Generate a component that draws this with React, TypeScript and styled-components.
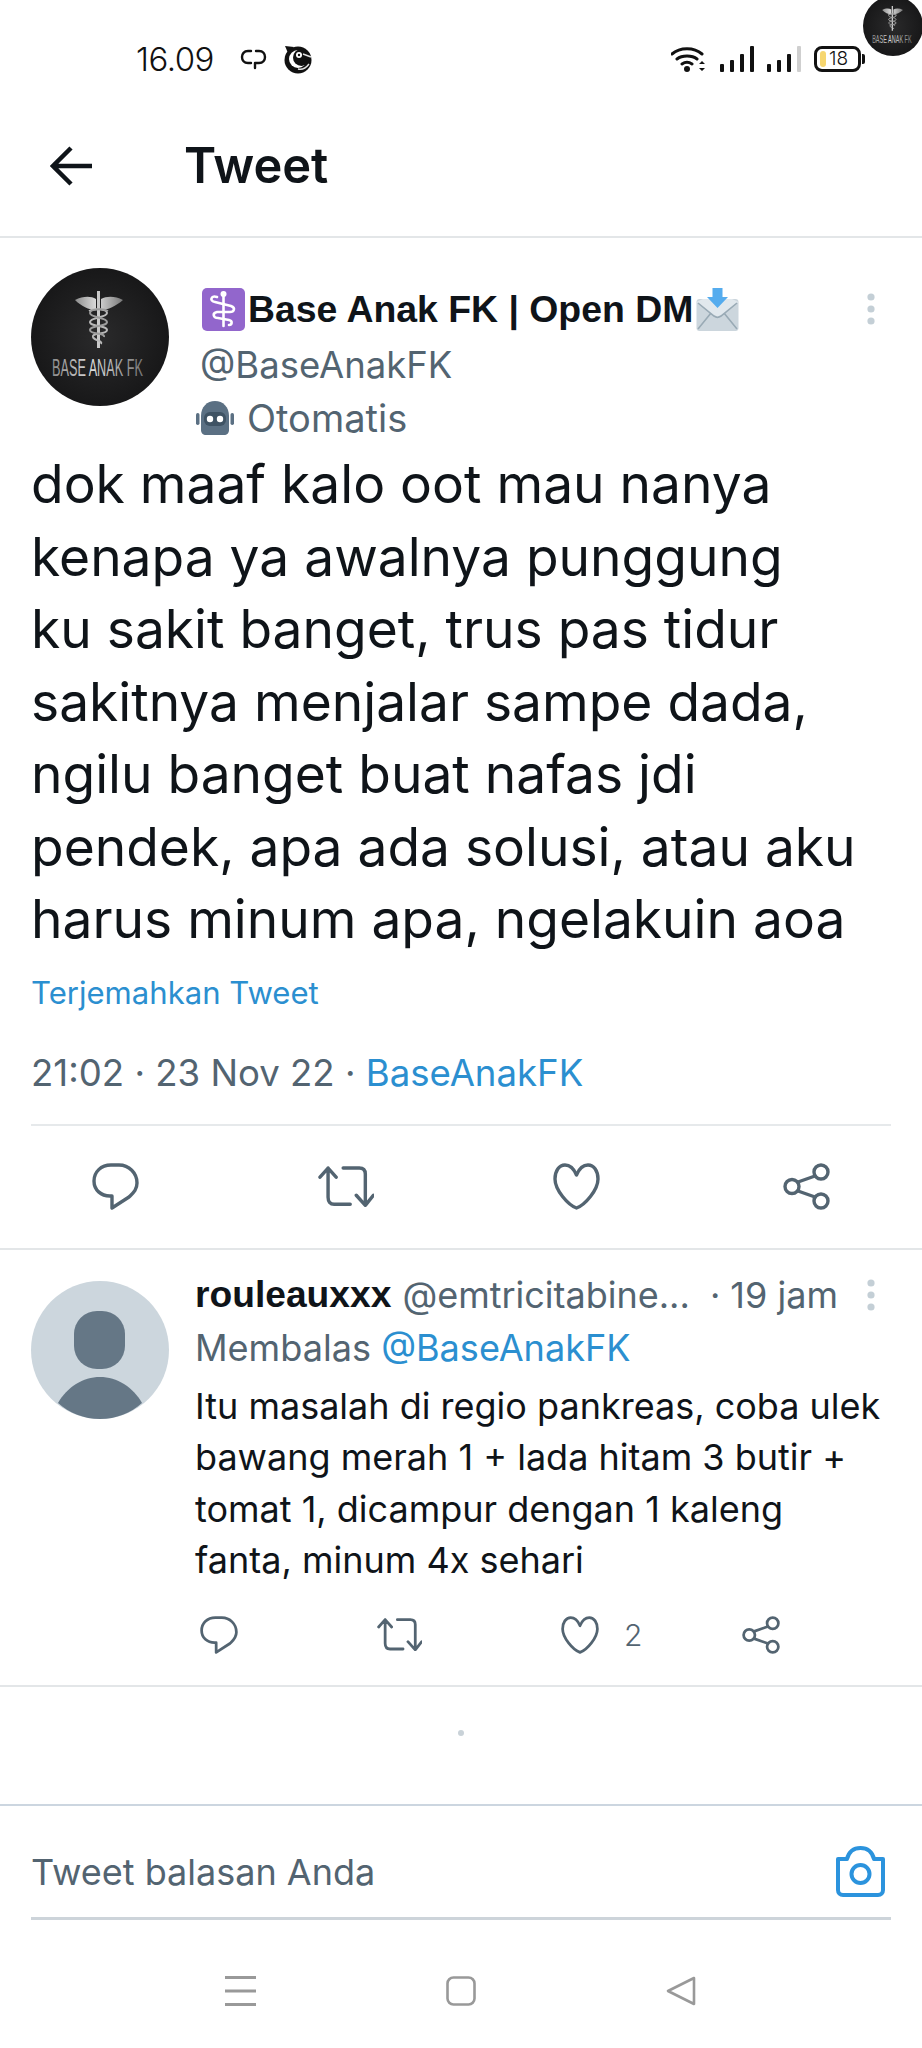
import React from "react";
import styled, { createGlobalStyle } from "styled-components";

const Global = createGlobalStyle`
  html, body { margin: 0; padding: 0; background: #fff; }
  * { box-sizing: border-box; }
`;

const GREY = "#536471";
const BLUE = "#2b8fd0";
const INK = "#0f1419";

const Page = styled.div`
  position: relative;
  width: 922px;
  height: 2048px;
  overflow: hidden;
  background: #fff;
  color: ${INK};
  font-family: Inter, "Liberation Sans", sans-serif;
  display: flex;
  flex-direction: column;
`;

const StatusBar = styled.div`
  height: 118px;
  padding: 0 61px 0 136px;
  display: flex;
  align-items: center;
`;
const Clock = styled.span`
  font-size: 33px;
  font-weight: 300;
  color: #111;
  letter-spacing: -0.5px;
  margin-right: 26px;
`;
const StatusGlyph = styled.svg`
  flex-shrink: 0;
`;
const BirdGlyph = styled.svg`
  flex-shrink: 0;
  margin-left: 17px;
`;
const StatusRight = styled.div`
  margin-left: auto;
  display: flex;
  align-items: center;
  gap: 13px;
`;
const Battery = styled.div`
  position: relative;
  width: 47px;
  height: 26px;
  border: 3px solid #111;
  border-radius: 8px;
  display: flex;
  align-items: center;
  padding-left: 3px;
  gap: 3px;
  &::after {
    content: "";
    position: absolute;
    right: -7px;
    top: 5px;
    width: 3px;
    height: 10px;
    background: #111;
    border-radius: 0 2px 2px 0;
  }
`;
const BatteryFill = styled.div`
  width: 6px;
  height: 16px;
  background: #f6d66f;
  border-radius: 3px;
`;
const BatteryText = styled.span`
  font-size: 19px;
  line-height: 20px;
  font-weight: 300;
  color: #111;
`;
const CornerBubble = styled.div`
  position: absolute;
  top: -4px;
  right: -1px;
  width: 60px;
  height: 60px;
`;

const Header = styled.header`
  height: 120px;
  padding: 0 0 23px 50px;
  display: flex;
  align-items: center;
  gap: 90px;
  border-bottom: 2px solid #e3e6e8;
`;
const Title = styled.h1`
  margin: 0;
  font-size: 48.8px;
  font-weight: 600;
  line-height: 56px;
  color: ${INK};
`;

const TweetSection = styled.section`
  padding: 0 31px;
`;
const AuthorRow = styled.div`
  display: grid;
  grid-template-columns: 138px 1fr 40px;
  column-gap: 31px;
`;
const AvatarSlot = styled.div<{ $top: number }>`
  margin-top: ${(p) => p.$top}px;
  width: 138px;
  height: 138px;
`;
const Meta = styled.div`
  margin-top: 44px;
  min-width: 0;
`;
const NameLine = styled.div`
  display: flex;
  align-items: center;
  height: 54px;
  padding-left: 2px;
  font-family: "Liberation Sans", Arial, sans-serif;
  font-weight: 700;
  font-size: 37.4px;
  color: ${INK};
  white-space: nowrap;
  gap: 3px;
`;
const MetaLine = styled.div`
  display: flex;
  align-items: center;
  height: 54px;
  margin-top: 2px;
  font-size: 36.5px;
  color: ${GREY};
  white-space: nowrap;
  gap: 13px;
`;
const BotLine = styled(MetaLine)`
  margin-left: -4px;
  margin-top: -1px;
  font-size: 38px;
`;
const MoreDots = styled.svg`
  display: block;
  flex-shrink: 0;
`;
const MoreSlot = styled.div`
  margin-top: 54px;
  display: flex;
  justify-content: center;
`;
const TweetBody = styled.p`
  margin: 3px 0 0;
  font-size: 53.3px;
  line-height: 72.5px;
  color: ${INK};
  white-space: nowrap;
`;
const Translate = styled.div`
  margin-top: 15px;
  font-size: 31.1px;
  line-height: 44px;
  color: ${BLUE};
`;
const Stamp = styled.div`
  margin-top: 36px;
  font-size: 36.6px;
  line-height: 44px;
  color: ${GREY};
`;
const Link = styled.span`
  color: ${BLUE};
`;
const Rule = styled.div`
  height: 2px;
  background: #e6e9eb;
  margin-top: 29px;
`;
const MainActions = styled.div`
  height: 124px;
  display: grid;
  grid-template-columns: repeat(4, 1fr);
  align-items: center;
  justify-items: center;
  border-bottom: 2px solid #e3e6e8;
`;

const ReplySection = styled.section`
  height: 437px;
  padding: 0 31px;
  display: grid;
  grid-template-columns: 138px 1fr;
  column-gap: 26px;
  border-bottom: 2px solid #e3e6e8;
`;
const ReplyContent = styled.div`
  padding-top: 23px;
  min-width: 0;
`;
const ReplyHead = styled.div`
  display: flex;
  align-items: center;
  height: 44px;
  font-size: 36px;
  white-space: nowrap;
  color: ${GREY};
`;
const ReplyName = styled.span`
  font-family: "Liberation Sans", Arial, sans-serif;
  font-weight: 700;
  font-size: 37.2px;
  color: ${INK};
  margin-right: 11px;
`;
const ReplyAge = styled.span`
  margin-left: 20px;
`;
const MoreInline = styled.span`
  margin-left: auto;
  margin-right: 15px;
  display: flex;
  width: 10px;
  justify-content: center;
`;
const ReplyingTo = styled.div`
  margin-top: 5px;
  height: 52px;
  line-height: 52px;
  font-size: 36.1px;
  color: ${GREY};
  white-space: nowrap;
`;
const ReplyBody = styled.p`
  margin: 7px 0 0;
  font-size: 36px;
  line-height: 51.5px;
  color: ${INK};
  white-space: nowrap;
`;
const ReplyActions = styled.div`
  height: 96px;
  margin-left: 4px;
  display: grid;
  grid-template-columns: repeat(4, 180.5px);
  align-items: center;
`;
const ReplyAction = styled.div`
  display: flex;
  align-items: center;
  gap: 24px;
`;
const IconSlot = styled.div`
  width: 40px;
  height: 40px;
  display: flex;
  align-items: center;
  justify-content: center;
`;
const Count = styled.span`
  font-size: 30px;
  font-weight: 300;
  color: ${GREY};
`;

const Loader = styled.div`
  height: 117px;
  padding-top: 43px;
  display: flex;
  justify-content: center;
`;
const LoaderDot = styled.div`
  width: 6px;
  height: 6px;
  border-radius: 50%;
  background: #c9d2d8;
`;

const Composer = styled.div`
  border-top: 2px solid #ccd6e0;
  height: 113px;
  padding: 21px 36px 0 31px;
  display: flex;
  align-items: center;
  justify-content: space-between;
`;
const Placeholder = styled.span`
  font-size: 36px;
  color: ${GREY};
`;
const ComposerRule = styled.div`
  height: 3px;
  margin: 0 31px;
  background: #cdd4da;
`;
const NavBar = styled.nav`
  flex: 1;
  padding: 14px 226px 0 225px;
  display: flex;
  align-items: center;
  justify-content: space-between;
`;

const Stroke = ({ w, h, vw, vh, color = GREY, sw = 3.4, children }: {
  w: number; h: number; vw: number; vh: number; color?: string; sw?: number; children: React.ReactNode;
}) => (
  <StatusGlyph width={w} height={h} viewBox={`0 0 ${vw} ${vh}`} fill="none" stroke={color} strokeWidth={sw} strokeLinecap="round" strokeLinejoin="round">
    {children}
  </StatusGlyph>
);

const ReplyIcon = ({ s }: { s: number }) => (
  <Stroke w={s} h={s} vw={47} vh={47}>
    <path d="M19 2H27C37 2 45 10 45 20C45 27 41 30 37 34L20 45V33H18C9 33 2 27 2 18C2 9 9 2 19 2Z" />
  </Stroke>
);
const RetweetIcon = ({ s }: { s: number }) => (
  <Stroke w={s * 1.2} h={s * 0.86} vw={56} vh={40}>
    <path d="M2 11L10 2L18 11M10 2V31C10 35 12 38 16 38H32M25 2H41C45 2 47 4 47 8V38M38 29L47 39L55 29" />
  </Stroke>
);
const HeartIcon = ({ s }: { s: number }) => (
  <Stroke w={s} h={s} vw={47} vh={47}>
    <path d="M23.5 12C21 6 17 2 12 2C6 2 2 8 2 16C2 27 15 42 23.5 45C32 42 45 27 45 16C45 8 41 2 35 2C30 2 26 6 23.5 12Z" />
  </Stroke>
);
const ShareIcon = ({ s }: { s: number }) => (
  <Stroke w={s} h={s} vw={47} vh={47}>
    <circle cx="38" cy="9" r="7" />
    <circle cx="9" cy="23.5" r="7" />
    <circle cx="38" cy="38" r="7" />
    <path d="M15 19L32 13M15 28L32 34" />
  </Stroke>
);

const Dots = () => (
  <MoreDots width="10" height="34" viewBox="0 0 10 34" fill="#c4cfd6">
    <circle cx="5" cy="5" r="3.6" />
    <circle cx="5" cy="17" r="3.6" />
    <circle cx="5" cy="29" r="3.6" />
  </MoreDots>
);

const BaseLogo = ({ size }: { size: number }) => (
  <svg width={size} height={size} viewBox="0 0 138 138" style={{ display: "block" }}>
    <defs>
      <radialGradient id="logoBg" cx="50%" cy="50%" r="55%">
        <stop offset="0%" stopColor="#2a2a2b" />
        <stop offset="100%" stopColor="#161617" />
      </radialGradient>
      <linearGradient id="logoMetal" x1="0" x2="1" y1="0" y2="0">
        <stop offset="0%" stopColor="#8c8c8c" />
        <stop offset="45%" stopColor="#dcdcdc" />
        <stop offset="100%" stopColor="#777" />
      </linearGradient>
    </defs>
    <circle cx="69" cy="69" r="69" fill="url(#logoBg)" />
    <path d="M44 32C52 28 60 28 65 31V42C58 42 50 38 44 32ZM92 32C84 28 76 28 70 31V42C77 42 85 38 92 32Z" fill="url(#logoMetal)" />
    <rect x="66" y="23" width="3" height="57" fill="#c9c9c9" />
    <path d="M58 43C63 40 76 41 76 45C76 50 59 49 59 54C59 59 76 57 76 62C76 67 61 64 62 69C63 73 72 72 70 76" fill="none" stroke="#b9b9b9" strokeWidth="2" />
    <path d="M77 43C72 40 59 41 59 45C59 50 76 49 76 54C76 59 59 57 59 62C59 67 74 64 73 69" fill="none" stroke="#9c9c9c" strokeWidth="2" />
    <text transform="translate(21 108) scale(0.54 1)" fontFamily="Liberation Sans, sans-serif" fontSize="23.5" fill="url(#logoMetal)">BASE ANAK FK</text>
  </svg>
);

const MedicalEmoji = () => (
  <svg width="43" height="43" viewBox="0 0 43 43" style={{ flexShrink: 0 }}>
    <rect width="43" height="43" rx="5" fill="#9266cc" />
    <path d="M21.5 5V38" stroke="#fff" strokeWidth="2.6" strokeLinecap="round" />
    <circle cx="21.5" cy="6" r="3" fill="#fff" />
    <path d="M15 9C9 7 7 13 13 14L29 18C34 20 32 24 28 24H15C10 25 11 30 16 30L27 32C31 33 30 37 27 37" fill="none" stroke="#fff" strokeWidth="2.6" strokeLinecap="round" />
  </svg>
);
const InboxEmoji = () => (
  <svg width="43" height="43" viewBox="0 0 43 43" style={{ flexShrink: 0 }}>
    <rect x="0.5" y="11" width="42" height="32" rx="3" fill="#ccd6dd" />
    <path d="M0.5 14L21.5 30L42.5 14L36 11H7Z" fill="#e1e8ed" />
    <path d="M2 41L15 25M41 41L28 25M2 15L18 28C20 29.5 23 29.5 25 28L41 15" fill="none" stroke="#99aab5" strokeWidth="1.6" />
    <path d="M16.5 0H26.5V9H32L21.5 20L11 9H16.5Z" fill="#55acee" />
  </svg>
);
const BotIcon = () => (
  <svg width="38" height="36" viewBox="0 0 38 36" style={{ flexShrink: 0 }}>
    <rect x="0" y="13" width="3.5" height="12" rx="1.7" fill="#5b7083" />
    <rect x="34.5" y="13" width="3.5" height="12" rx="1.7" fill="#5b7083" />
    <path d="M5 16C5 7 11 1 19 1C27 1 33 7 33 16V30C33 33 31 35 28 35H10C7 35 5 33 5 30Z" fill="#5b7083" />
    <rect x="8" y="12" width="22" height="14" rx="6" fill="#3f5364" />
    <circle cx="14" cy="19" r="3.2" fill="#fff" />
    <circle cx="24" cy="19" r="3.2" fill="#fff" />
  </svg>
);
const DefaultAvatar = () => (
  <svg width="138" height="138" viewBox="0 0 138 138" style={{ display: "block" }}>
    <circle cx="69" cy="69" r="69" fill="#ccd6dd" />
    <rect x="43" y="30" width="51" height="58" rx="23" fill="#657786" />
    <path d="M27 122C36 106 52 96 69 96C86 96 102 106 111 122C100 132 85 138 69 138C53 138 38 132 27 122Z" fill="#657786" />
  </svg>
);

const lines = [
  "dok maaf kalo oot mau nanya",
  "kenapa ya awalnya punggung",
  "ku sakit banget, trus pas tidur",
  "sakitnya menjalar sampe dada,",
  "ngilu banget buat nafas jdi",
  "pendek, apa ada solusi, atau aku",
  "harus minum apa, ngelakuin aoa",
];
const replyLines = [
  "Itu masalah di regio pankreas, coba ulek",
  "bawang merah 1 + lada hitam 3 butir +",
  "tomat 1, dicampur dengan 1 kaleng",
  "fanta, minum 4x sehari",
];

export default function App() {
  return (
    <Page>
      <Global />
      <StatusBar>
        <Clock>16.09</Clock>
        <Stroke w={27} h={24} vw={27} vh={24} color="#111" sw={2.4}>
          <path d="M11 4H8C4 4 2 7 2 10C2 13 4 16 8 16H11M16 4H19C23 4 25 7 25 10C25 13 23 16 19 16H15V21" />
        </Stroke>
        <BirdGlyph width="28" height="30" viewBox="0 0 28 30">
          <circle cx="14" cy="16" r="13.5" fill="#111" />
          <path d="M1 2L10 3L4 9Z" fill="#111" />
          <circle cx="14" cy="15" r="9" fill="#fff" />
          <circle cx="17.5" cy="13.5" r="8.5" fill="#111" />
          <circle cx="15" cy="11" r="3" fill="#fff" />
          <circle cx="15" cy="11" r="1.2" fill="#111" />
          <path d="M19 10L27 13M14 25C18 26 22 24 25 20" stroke="#e5e5e5" strokeWidth="1.4" fill="none" />
        </BirdGlyph>
        <StatusRight>
          <svg width="36" height="27" viewBox="0 0 36 27">
            <path d="M1 8C9 1 23 1 31 8M6 13C11 9 21 9 26 13M11 18C14 16 18 16 21 18" fill="none" stroke="#111" strokeWidth="3" strokeLinecap="round" />
            <circle cx="16" cy="23" r="3" fill="#111" />
            <path d="M28 18L31 15L34 18ZM28 22L31 25L34 22Z" fill="#111" />
          </svg>
          <svg width="34" height="26" viewBox="0 0 34 26">
            <rect x="0" y="18" width="4" height="8" rx="1" fill="#111" />
            <rect x="10" y="14" width="4" height="12" rx="1" fill="#111" />
            <rect x="20" y="8" width="4" height="18" rx="1" fill="#111" />
            <rect x="30" y="0" width="4" height="26" rx="1" fill="#111" />
          </svg>
          <svg width="34" height="26" viewBox="0 0 34 26">
            <rect x="0" y="18" width="4" height="8" rx="1" fill="#111" />
            <rect x="10" y="14" width="4" height="12" rx="1" fill="#111" />
            <rect x="20" y="8" width="4" height="18" rx="1" fill="#111" />
            <rect x="30" y="0" width="4" height="26" rx="1" fill="#cfcfcf" />
          </svg>
          <Battery>
            <BatteryFill />
            <BatteryText>18</BatteryText>
          </Battery>
        </StatusRight>
      </StatusBar>
      <CornerBubble>
        <BaseLogo size={60} />
      </CornerBubble>

      <Header>
        <Stroke w={44} h={42} vw={44} vh={42} color={INK} sw={4.5}>
          <path d="M2 21H42M21 3L3 21L21 39" strokeLinecap="butt" strokeLinejoin="miter" />
        </Stroke>
        <Title>Tweet</Title>
      </Header>

      <TweetSection>
        <AuthorRow>
          <AvatarSlot $top={30}>
            <BaseLogo size={138} />
          </AvatarSlot>
          <Meta>
            <NameLine>
              <MedicalEmoji />
              Base Anak FK | Open DM
              <InboxEmoji />
            </NameLine>
            <MetaLine>@BaseAnakFK</MetaLine>
            <BotLine>
              <BotIcon />
              Otomatis
            </BotLine>
          </Meta>
          <MoreSlot>
            <Dots />
          </MoreSlot>
        </AuthorRow>
        <TweetBody>
          {lines.map((l) => (
            <React.Fragment key={l}>
              {l}
              <br />
            </React.Fragment>
          ))}
        </TweetBody>
        <Translate>Terjemahkan Tweet</Translate>
        <Stamp>
          21:02 · 23 Nov 22 · <Link>BaseAnakFK</Link>
        </Stamp>
        <Rule />
      </TweetSection>

      <MainActions>
        <ReplyIcon s={47} />
        <RetweetIcon s={47} />
        <HeartIcon s={47} />
        <ShareIcon s={47} />
      </MainActions>

      <ReplySection>
        <AvatarSlot $top={31}>
          <DefaultAvatar />
        </AvatarSlot>
        <ReplyContent>
          <ReplyHead>
            <ReplyName>rouleauxxx</ReplyName>
            @emtricitabine...
            <ReplyAge>· 19 jam</ReplyAge>
            <MoreInline>
              <Dots />
            </MoreInline>
          </ReplyHead>
          <ReplyingTo>
            Membalas <Link>@BaseAnakFK</Link>
          </ReplyingTo>
          <ReplyBody>
            {replyLines.map((l) => (
              <React.Fragment key={l}>
                {l}
                <br />
              </React.Fragment>
            ))}
          </ReplyBody>
          <ReplyActions>
            <ReplyAction>
              <IconSlot>
                <ReplyIcon s={38} />
              </IconSlot>
            </ReplyAction>
            <ReplyAction>
              <IconSlot>
                <RetweetIcon s={38} />
              </IconSlot>
            </ReplyAction>
            <ReplyAction>
              <IconSlot>
                <HeartIcon s={38} />
              </IconSlot>
              <Count>2</Count>
            </ReplyAction>
            <ReplyAction>
              <IconSlot>
                <ShareIcon s={38} />
              </IconSlot>
            </ReplyAction>
          </ReplyActions>
        </ReplyContent>
      </ReplySection>

      <Loader>
        <LoaderDot />
      </Loader>

      <Composer>
        <Placeholder>Tweet balasan Anda</Placeholder>
        <Stroke w={51} h={51} vw={51} vh={51} color="#2b93dd" sw={4}>
          <path d="M3 13H12C14 5 19 2 25.5 2C32 2 37 5 39 13H48V44C48 47 46 49 43 49H8C5 49 3 47 3 44Z" />
          <circle cx="25.5" cy="28" r="9" />
        </Stroke>
      </Composer>
      <ComposerRule />

      <NavBar>
        <Stroke w={31} h={30} vw={31} vh={30} color="#999" sw={3}>
          <path d="M0 1.5H31M0 15H31M0 28.5H31" strokeLinecap="butt" />
        </Stroke>
        <Stroke w={30} h={30} vw={30} vh={30} color="#999" sw={2.6}>
          <rect x="1.5" y="1.5" width="27" height="27" rx="6" />
        </Stroke>
        <Stroke w={30} h={30} vw={30} vh={30} color="#999" sw={2.6}>
          <path d="M28 2L2 15L28 28Z" />
        </Stroke>
      </NavBar>
    </Page>
  );
}
